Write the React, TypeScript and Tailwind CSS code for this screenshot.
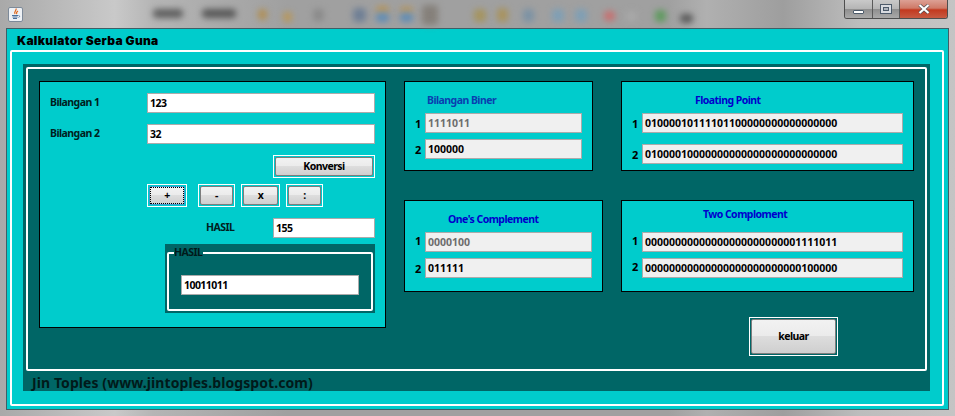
const FONT = "font-['Noto_Sans',sans-serif]";
const LABEL = 'text-[10.5px] font-bold tracking-[-0.55px]';

// blurred toolbar showing through the aero title bar
const BLOBS = [
  'left-[147px] top-[9px] h-[9px] w-[30px] bg-[#5f5f5f]',
  'left-[196px] top-[9px] h-[9px] w-[34px] bg-[#585858]',
  'left-[252px] top-[9px] h-[11px] w-[9px] bg-[#b08f55]',
  'left-[277px] top-[12px] h-[10px] w-[9px] bg-[#b8975a]',
  'left-[307px] top-[9px] h-[12px] w-[11px] bg-[#8a8a8a]',
  'left-[347px] top-[8px] h-[14px] w-[13px] bg-[#6f7f95]',
  'left-[370px] top-[6px] h-[7px] w-[13px] bg-[#b8955a]',
  'left-[370px] top-[13px] h-[9px] w-[13px] bg-[#5f8cb5]',
  'left-[394px] top-[7px] h-[6px] w-[13px] bg-[#b8955a]',
  'left-[394px] top-[13px] h-[9px] w-[13px] bg-[#5f8cb5]',
  'left-[416px] top-[5px] h-[20px] w-[16px] bg-[#85807a]',
  'left-[468px] top-[9px] h-[13px] w-[12px] bg-[#a5945f]',
  'left-[491px] top-[8px] h-[14px] w-[11px] bg-[#a8935f]',
  'left-[517px] top-[9px] h-[13px] w-[11px] bg-[#7b92a5]',
  'left-[546px] top-[9px] h-[13px] w-[12px] bg-[#7f9fb5]',
  'left-[569px] top-[9px] h-[13px] w-[12px] bg-[#7f9fb5]',
  'left-[598px] top-[11px] h-[10px] w-[11px] bg-[#c77070]',
  'left-[620px] top-[11px] h-[11px] w-[11px] bg-[#a8a8a8]',
  'left-[649px] top-[10px] h-[12px] w-[11px] bg-[#5f9a5f]',
  'left-[674px] top-[14px] h-[9px] w-[13px] bg-[#5a5a5a]',
];

const TextBox = ({ value, width, height = 'h-5', grey, dim }: { value: string; width: string; height?: string; grey?: boolean; dim?: boolean }) => (
  <div className={`${width} ${height} flex items-center border border-[#ababab] px-[2px] text-[10.5px] font-bold leading-none ${grey ? 'bg-[#f0f0f0]' : 'bg-white'} ${dim ? 'text-[#6d6d6d]' : 'text-black'}`}>
    {value}
  </div>
);

const Button = ({ label, width, height = 'h-[23px]', focused }: { label: string; width: string; height?: string; focused?: boolean }) => (
  <div className={`${width} ${height} shrink-0 border border-white p-px`}>
    <div className={`flex h-full w-full items-center justify-center rounded-[2px] border ${LABEL} text-black bg-[linear-gradient(#f2f2f2_0%,#ebebeb_48%,#dddddd_50%,#cfcfcf_100%)] ${focused ? 'border-[#3d9ad1]' : 'border-[#7d7d7d]'}`}>
      <div className={`flex h-full w-full items-center justify-center ${focused ? 'border border-dotted border-black' : ''}`}>{label}</div>
    </div>
  </div>
);

const NumberedField = ({ no, value, width, dim, labelUp }: { no: string; value: string; width: string; dim?: boolean; labelUp?: boolean }) => (
  <div className="flex items-center">
    <span className={`w-[10px] text-[11px] font-bold leading-none text-black ${labelUp ? '-mt-1' : ''}`}>{no}</span>
    <TextBox value={value} width={width} grey dim={dim} />
  </div>
);

const App = () => {
  return (
    <div className={`${FONT} relative flex h-[416px] w-[955px] flex-col overflow-hidden bg-[linear-gradient(90deg,#a9a9a9_0%,#c9c9c9_12%,#b5b5b5_16%,#a0a0a0_30%,#a0a0a0_70%,#b0b0b0_74%,#9e9e9e_82%,#bdbdbd_90%,#c4c4c4_100%)] px-[6px] pb-[6px]`}>
      {/* title bar */}
      <div className="relative flex h-7 shrink-0 items-start">
        {BLOBS.map((blob) => (
          <div key={blob} className={`absolute rounded-sm blur-[3px] ${blob}`} />
        ))}
        <div className="mt-[7px] ml-[2px] flex h-[15px] w-[15px] items-center justify-center rounded-[2px] border border-[#7d8a99] bg-[#eef1f5]">
          <svg viewBox="0 0 13 13" className="h-[13px] w-[13px]" fill="none">
            <path d="M7 0.5c1 2-2.5 3-1 5.5M9 3C7.5 4 7 5 8 6" stroke="#e0661a" strokeWidth="1.2" />
            <path d="M3 7.5h6M3.5 9h5M4 10.5h4" stroke="#4a6f9c" strokeWidth="1" />
            <path d="M9.5 7.5c1.5 0 1.5 1.5 0 2" stroke="#4a6f9c" strokeWidth="0.8" />
          </svg>
        </div>
        <div className="absolute right-[1px] top-0 flex h-[19px] w-[104px] overflow-hidden rounded-b-[3px] border border-t-0 border-[#4e4e4e]">
          <div className="flex w-[28px] items-end justify-center border-r border-[#5a5a5a] bg-[linear-gradient(#c9c9c9_0%,#b5b5b5_48%,#8f8f8f_52%,#a9a9a9_100%)] pb-[4px]">
            <div className="h-[4px] w-[11px] rounded-[1px] border border-[#4c5a6a] bg-white" />
          </div>
          <div className="flex w-[27px] items-center justify-center border-r border-[#5a5a5a] bg-[linear-gradient(#c9c9c9_0%,#b5b5b5_48%,#8f8f8f_52%,#a9a9a9_100%)]">
            <div className="flex h-[10px] w-[12px] items-center justify-center border border-[#4c5a6a] bg-[#d8dbe0]">
              <div className="h-[4px] w-[6px] border border-[#4c5a6a] bg-[#aeb5bd]" />
            </div>
          </div>
          <div className="flex flex-1 items-center justify-center bg-[linear-gradient(#dca094_0%,#cf7a68_45%,#c2391f_55%,#c65a42_100%)]">
            <svg viewBox="0 0 12 10" className="h-[10px] w-[12px]">
              <path d="M1.5 1 L10.5 9 M10.5 1 L1.5 9" stroke="#4f4f55" strokeWidth="3.4" />
              <path d="M1.5 1 L10.5 9 M10.5 1 L1.5 9" stroke="#ffffff" strokeWidth="2.2" />
            </svg>
          </div>
        </div>
      </div>

      {/* content */}
      <div className="flex min-h-0 flex-1 flex-col border border-[#3f5f66] bg-[#00cccc] pb-[3px] pl-[3px] pr-[4px]">
        <div className="flex h-[21px] shrink-0 items-center pl-[7px] pt-[2px] font-['Inter',sans-serif] text-[12px] font-black tracking-[0.3px] text-black">
          Kalkulator Serba Guna
        </div>
        <div className="flex min-h-0 flex-1 flex-col rounded-[2px] border-2 border-white pb-[13px] pl-[11px] pr-[12px] pt-[12px]">
          <div className="flex min-h-0 flex-1 flex-col bg-[#006666] px-[3px] pt-[3px]">
            <div className="flex h-[304px] shrink-0 items-start rounded-[2px] border-2 border-white pl-[11px] pt-[12px]">
              {/* left card */}
              <div className={`h-[247px] w-[347px] shrink-0 border border-black bg-[#00cccc] pl-[10px] pt-[11px] ${LABEL} text-[#002020]`}>
                <div className="flex items-center">
                  <span className="w-[97px]">Bilangan 1</span>
                  <TextBox value="123" width="w-[228px]" />
                </div>
                <div className="mt-[11px] flex items-center">
                  <span className="w-[97px]">Bilangan 2</span>
                  <TextBox value="32" width="w-[228px]" />
                </div>
                <div className="mt-[11px] flex justify-end pr-[10px]">
                  <Button label="Konversi" width="w-[102px]" />
                </div>
                <div className="mt-[6px] flex pl-[97px]">
                  <Button label="+" width="w-[40px]" focused />
                  <div className="ml-[11px]"><Button label="-" width="w-[37px]" /></div>
                  <div className="ml-[6px]"><Button label="x" width="w-[39px]" /></div>
                  <div className="ml-[6px]"><Button label=":" width="w-[37px]" /></div>
                </div>
                <div className="mt-[11px] flex items-center pl-[156px]">
                  <span className="w-[67px]">HASIL</span>
                  <TextBox value="155" width="w-[102px]" />
                </div>
                <div className="ml-[115px] mt-[6px] h-[69px] w-[210px] bg-[#006666] px-[2px] pb-[2px] pt-[8px]">
                  <div className="relative h-[59px] rounded-[2px] border-2 border-white pl-[12px] pt-[21px]">
                    <span className="absolute -top-[9px] left-[5px] bg-[#006666] pr-[1px] leading-[14px] text-[#001a1a]">HASIL</span>
                    <TextBox value="10011011" width="w-[178px]" />
                  </div>
                </div>
              </div>

              {/* right side */}
              <div className="ml-[18px] flex flex-col">
                <div className="flex">
                  <div className="h-[90px] w-[189px] border border-black bg-[#00cccc] pl-[10px] pt-[10px]">
                    <div className={`h-[16px] pl-[12px] ${LABEL} leading-[16px] text-[#0a3fb0]`}>Bilangan Biner</div>
                    <div className="mt-[5px] flex flex-col gap-[6px]">
                      <NumberedField no="1" value="1111011" width="w-[157px]" dim />
                      <NumberedField no="2" value="100000" width="w-[157px]" />
                    </div>
                  </div>
                  <div className="ml-[28px] h-[90px] w-[293px] border border-black bg-[#00cccc] pl-[10px] pt-[10px]">
                    <div className={`h-[16px] pl-[63px] ${LABEL} leading-[16px] text-[#0000cc]`}>Floating Point</div>
                    <div className="mt-[5px] flex flex-col gap-[11px]">
                      <NumberedField no="1" value="01000010111101100000000000000000" width="w-[261px]" />
                      <NumberedField no="2" value="01000010000000000000000000000000" width="w-[261px]" />
                    </div>
                  </div>
                </div>
                <div className="mt-[29px] flex">
                  <div className="h-[92px] w-[199px] border border-black bg-[#00cccc] pl-[10px] pt-[10px]">
                    <div className={`h-[16px] pl-[33px] ${LABEL} leading-[16px] text-[#0000cc]`}>One's Complement</div>
                    <div className="mt-[5px] flex flex-col gap-[6px]">
                      <NumberedField no="1" value="0000100" width="w-[167px]" dim labelUp />
                      <NumberedField no="2" value="011111" width="w-[167px]" />
                    </div>
                  </div>
                  <div className="ml-[18px] h-[92px] w-[293px] border border-black bg-[#00cccc] pl-[10px] pt-[5px]">
                    <div className={`h-[16px] pl-[71px] ${LABEL} leading-[16px] text-[#0000cc]`}>Two Comploment</div>
                    <div className="mt-[10px] flex flex-col gap-[6px]">
                      <NumberedField no="1" value="00000000000000000000000001111011" width="w-[261px]" labelUp />
                      <NumberedField no="2" value="00000000000000000000000000100000" width="w-[261px]" labelUp />
                    </div>
                  </div>
                </div>
                <div className="ml-[345px] mt-[25px]">
                  <Button label="keluar" width="w-[89px]" height="h-[39px]" />
                </div>
              </div>
            </div>
            <div className="flex-1 pl-[6px] pt-[2px] text-[14px] font-bold leading-[19px] tracking-[0.08px] text-[#001a1a]">
              Jin Toples (www.jintoples.blogspot.com)
            </div>
          </div>
        </div>
      </div>
    </div>
  );
};

export default App;
